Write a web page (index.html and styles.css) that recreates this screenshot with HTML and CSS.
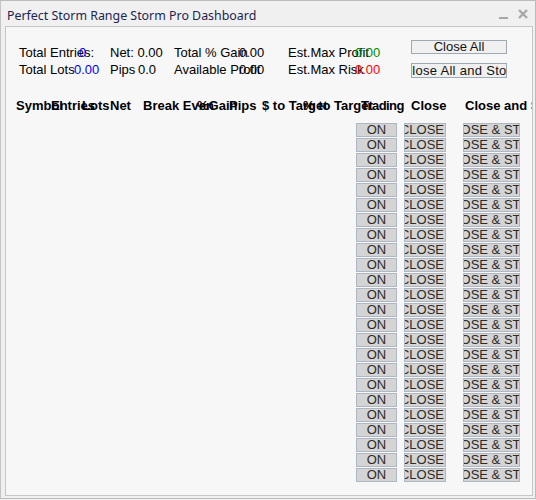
FILE: index.html
```html
<!DOCTYPE html>
<html>
<head>
<meta charset="utf-8">
<link rel="stylesheet" href="styles.css">
</head>
<body>
<div class="window">
  <div class="titlebar">
    <span class="title">Perfect Storm Range Storm Pro Dashboard</span>
    <span class="controls">
      <svg class="min" width="9" height="3" viewBox="0 0 9 3"><rect x="0" y="0" width="9" height="2" fill="#a8a8a8"/></svg>
      <svg class="close" width="10" height="10" viewBox="0 0 10 10"><path d="M1 1 L9 9 M9 1 L1 9" stroke="#a8a8a8" stroke-width="2.4"/></svg>
    </span>
  </div>
  <div class="panel">
    <div class="summary">
      <div class="stats">
        <span class="c1 s2">Total Entries:</span>
        <span class="c3 blue">0</span>
        <span class="c4 s2">Net: 0.00</span>
        <span class="c6">Total % Gain</span>
        <span class="c7">0.00</span>
        <span class="c8">Est.Max Profit</span>
        <span class="c9 green">0.00</span>

        <span class="c1">Total Lots</span>
        <span class="c2 s2 blue">0.00</span>
        <span class="c4">Pips</span>
        <span class="c5">0.0</span>
        <span class="c6">Available Profit</span>
        <span class="c7">0.00</span>
        <span class="c8">Est.Max Risk</span>
        <span class="c9 red">0.00</span>
      </div>
      <div class="actions">
        <button class="btn top-btn">Close All</button>
        <button class="btn top-btn wide"><span>Close All and Stop</span></button>
      </div>
    </div>
    <div class="header">
      <span class="h-symbol">Symbol</span>
      <span class="h-entries">Entries</span>
      <span class="h-lots">Lots</span>
      <span class="h-net">Net</span>
      <span class="h-be">Break Even</span>
      <span class="h-gain">%Gain</span>
      <span class="h-pips">Pips</span>
      <span class="h-dt">$ to Target</span>
      <span class="h-pt">% to Target</span>
      <span class="h-trading">Trading</span>
      <span class="h-close">Close</span>
      <span class="h-cs">Close and Stop</span>
    </div>
    <div class="rows" id="rows"></div>
  </div>
</div>
<script>
  var rows = document.getElementById('rows');
  var html = '';
  for (var i = 0; i < 24; i++) {
    html += '<div class="row"><button class="btn rb on">ON</button><button class="btn rb cl"><span>CLOSE</span></button><button class="btn rb cs">CLOSE &amp; STOP</button></div>';
  }
  rows.innerHTML = html;
</script>
</body>
</html>
```

FILE: styles.css
```css
html, body {
  margin: 0;
  padding: 0;
  background: #f0f0f0;
}
body {
  width: 536px;
  height: 500px;
  overflow: hidden;
}
.window {
  box-sizing: border-box;
  width: 536px;
  height: 499px;
  border: 1px solid #bcbcbc;
  border-left-color: #c4c4c4;
  background: #f0f0f0;
  display: flex;
  flex-direction: column;
}
.titlebar {
  height: 24px;
  flex: none;
  display: flex;
  align-items: center;
  justify-content: space-between;
  padding: 0 7px 0 6px;
}
.title {
  font-family: "Noto Sans", "DejaVu Sans", sans-serif;
  font-size: 12.4px;
  color: #1c2450;
  margin-top: 4px;
}
.controls {
  display: flex;
  align-items: center;
  gap: 10px;
  margin-top: 2px;
}
.controls .min { margin-top: 9px; }
.panel {
  flex: 1;
  margin: 1px 2px 2px 4px;
  border: 1px solid #c6c6c6;
  background: #f7f7f7;
  font-family: "Liberation Sans", Arial, sans-serif;
  font-size: 13px;
  color: #000;
  overflow: hidden;
}
.summary {
  display: flex;
  padding: 13px 0 0 13px;
}
.stats {
  display: grid;
  grid-template-columns: 55px 5px 31px 28px 36px 65px 49px 67px 56px;
  grid-auto-rows: 17px;
  line-height: 17px;
  margin-top: 4px;
  white-space: nowrap;
}
.stats span { overflow: visible; }
.c1 { grid-column-start: 1; }
.c2 { grid-column-start: 2; }
.c3 { grid-column-start: 3; }
.c4 { grid-column-start: 4; }
.c5 { grid-column-start: 5; }
.c6 { grid-column-start: 6; }
.c7 { grid-column-start: 7; }
.c8 { grid-column-start: 8; }
.c9 { grid-column-start: 9; }
.s2 { grid-column-end: span 2; }
.blue { color: #0000ff; }
.green { color: #008c00; }
.red { color: #ff0000; }
.actions {
  display: flex;
  flex-direction: column;
  gap: 9px;
}
.btn {
  font-family: "Liberation Sans", Arial, sans-serif;
  font-size: 13px;
  padding: 0;
  margin: 0;
  overflow: hidden;
  white-space: nowrap;
  display: flex;
  align-items: center;
  justify-content: center;
  box-sizing: border-box;
  line-height: 12px;
}
.btn span { flex: none; }
.top-btn {
  width: 96px;
  height: 14px;
  background: #f0f0f0;
  border: 1px solid #9ea9b6;
  color: #111;
}
.top-btn.wide {
  height: 15px;
  justify-content: flex-start;
}
.top-btn.wide span { margin-left: -9.5px; letter-spacing: 0.3px; }
.header {
  display: grid;
  grid-template-columns: 35px 31px 28px 33px 54px 32px 33px 41px 60px 48px 54px 80px;
  padding-left: 10px;
  margin-top: 19px;
  font-weight: bold;
  line-height: 17px;
  height: 17px;
  white-space: nowrap;
}
.h-trading { letter-spacing: -0.6px; margin-left: -2px; }
.rows {
  margin-top: 9px;
  padding-left: 350px;
  display: flex;
  flex-direction: column;
  gap: 1px;
}
.row {
  display: flex;
  height: 14px;
}
.rb {
  height: 14px;
  background: #d4d4d4;
  border: 1px solid #adb8c4;
  color: #2e2a26;
}
.on { width: 41px; margin-right: 7px; }
.cl { width: 42px; margin-right: 17px; justify-content: flex-end; }
.cl span { margin-right: 1px; }
.cs { width: 57px; }
```
